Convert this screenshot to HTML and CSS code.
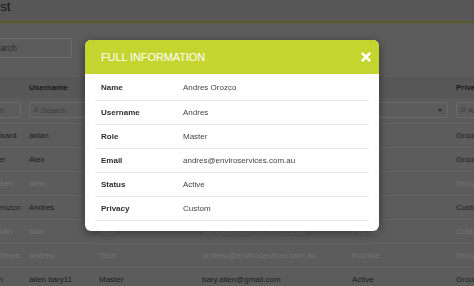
FILE: index.html
```html
<!DOCTYPE html>
<html>
<head>
<meta charset="utf-8">
<link rel="stylesheet" href="styles.css">
</head>
<body>
<div class="page">
  <header class="topbar"><h1 class="title">User List</h1></header>
  <div class="toolbar">
    <div class="search-box">Search</div>
  </div>
  <table class="grid">
    <colgroup>
      <col class="c1"><col class="c2"><col class="c3"><col class="c4"><col class="c5"><col class="c6">
    </colgroup>
    <thead>
      <tr class="head-row">
        <th>Name</th><th>Username</th><th>Role</th><th>Email</th><th>Status</th><th>Privacy</th>
      </tr>
      <tr class="filter-row">
        <td><div class="filter"><svg class="mag" viewBox="0 0 8 8"><circle cx="4.6" cy="3.4" r="2.3"/><path d="M3 5 L1 7"/></svg><span>Search</span></div></td>
        <td><div class="filter"><svg class="mag" viewBox="0 0 8 8"><circle cx="4.6" cy="3.4" r="2.3"/><path d="M3 5 L1 7"/></svg><span>Search</span></div></td>
        <td><div class="filter"><svg class="mag" viewBox="0 0 8 8"><circle cx="4.6" cy="3.4" r="2.3"/><path d="M3 5 L1 7"/></svg><span>Search</span></div></td>
        <td><div class="filter"><svg class="mag" viewBox="0 0 8 8"><circle cx="4.6" cy="3.4" r="2.3"/><path d="M3 5 L1 7"/></svg><span>Search</span></div></td>
        <td><div class="filter select"><span></span><i class="caret"></i></div></td>
        <td><div class="filter"><svg class="mag" viewBox="0 0 8 8"><circle cx="4.6" cy="3.4" r="2.3"/><path d="M3 5 L1 7"/></svg><span>All</span></div></td>
      </tr>
    </thead>
    <tbody>
      <tr><td>Aidan Pickard</td><td>aidan</td><td>Master</td><td>aidan@enviroservices.com.au</td><td>Active</td><td>Group</td></tr>
      <tr><td>Alex Baker</td><td>Alex</td><td>Tech</td><td>alex@enviroservices.com.au</td><td>Active</td><td>Group</td></tr>
      <tr class="off"><td>Allen Jensen</td><td>allen</td><td>Tech</td><td>allen@enviroservices.com.au</td><td>Inactive</td><td>Group</td></tr>
      <tr><td>Andres Orozco</td><td>Andres</td><td>Master</td><td>andres@enviroservices.com.au</td><td>Active</td><td>Custom</td></tr>
      <tr class="off"><td>Andrew Bain</td><td>bain</td><td>Tech</td><td>bain@enviroservices.com.au</td><td>Inactive</td><td>Custom</td></tr>
      <tr class="off"><td>Andy Mathews</td><td>andrew</td><td>Tech</td><td>andrew@enviroservices.com.au</td><td>Inactive</td><td>Group</td></tr>
      <tr><td>Bary Allen</td><td>allen bary11</td><td>Master</td><td>bary.allen@gmail.com</td><td>Active</td><td>Group</td></tr>
    </tbody>
  </table>
</div>

<div class="modal">
  <div class="modal-head">
    <span class="modal-title">FULL INFORMATION</span>
    <svg class="close" viewBox="0 0 10 10"><path d="M1.6 1.6 L8.4 8.4 M8.4 1.6 L1.6 8.4"/></svg>
  </div>
  <div class="modal-body">
    <table class="info">
      <tr><th>Name</th><td>Andres Orozco</td></tr>
      <tr><th>Username</th><td>Andres</td></tr>
      <tr><th>Role</th><td>Master</td></tr>
      <tr><th>Email</th><td>andres@enviroservices.com.au</td></tr>
      <tr><th>Status</th><td>Active</td></tr>
      <tr><th>Privacy</th><td>Custom</td></tr>
    </table>
  </div>
</div>
</body>
</html>
```

FILE: styles.css
```css
html, body {
  margin: 0;
  padding: 0;
  background: #5c5c5c;
  overflow: hidden;
  font-family: "Liberation Sans", Arial, sans-serif;
}

.page {
  margin-left: -39px;
  width: 620px;
}

.topbar {
  height: 21px;
  background: #575757;
  border-bottom: 2px solid #555b22;
}

.title {
  margin: 0 0 0 -2px;
  font-size: 13px;
  line-height: 13px;
  font-weight: normal;
  color: #141414;
}

.toolbar {
  padding-top: 15px;
  height: 20px;
}

.search-box {
  margin-left: 19px;
  width: 92px;
  height: 20px;
  box-sizing: border-box;
  border: 1px solid #6c6c6c;
  border-radius: 2px;
  padding-left: 9px;
  font-size: 8.5px;
  line-height: 18px;
  color: #2a2a2a;
}

.grid {
  margin-top: 19px;
  border-collapse: collapse;
  table-layout: fixed;
  width: 569px;
  font-size: 8px;
  color: #1c1c1c;
}

.c1 { width: 62px; }
.c2 { width: 70px; }
.c3 { width: 103px; }
.c4 { width: 150px; }
.c5 { width: 104px; }
.c6 { width: 80px; }

.grid th, .grid td {
  padding: 0 0 0 6px;
  text-align: left;
  white-space: nowrap;
  overflow: hidden;
}

.head-row {
  height: 21px;
  background: #575757;
}

.head-row th {
  font-weight: bold;
  color: #1a1a1a;
}

.filter-row {
  height: 25px;
}

.filter-row td {
  padding-right: 2px;
}

.filter {
  height: 16px;
  box-sizing: border-box;
  border: 1px solid #6a6a6a;
  border-radius: 2px;
  display: flex;
  align-items: center;
  gap: 2px;
  padding-left: 3px;
  color: #3c3c3c;
}

.mag {
  width: 6px;
  height: 6px;
  fill: none;
  stroke: #3c3c3c;
  stroke-width: 1;
}

.select {
  justify-content: flex-end;
  padding-right: 5px;
}

.caret {
  width: 0;
  height: 0;
  border-left: 2.5px solid transparent;
  border-right: 2.5px solid transparent;
  border-top: 3px solid #2a2a2a;
}

.grid tbody tr {
  height: 24px;
  border-top: 1px solid #646464;
}

.grid tbody tr.off {
  color: #747474;
}

.modal {
  position: fixed;
  left: 85px;
  top: 40px;
  width: 294px;
  background: #ffffff;
  border-radius: 6px;
  overflow: hidden;
  box-shadow: 0 2px 10px rgba(0, 0, 0, 0.45);
}

.modal-head {
  height: 34px;
  background: #c5d52f;
  display: flex;
  align-items: center;
  justify-content: space-between;
  padding: 0 8px 0 16px;
}

.modal-title {
  color: #ffffff;
  font-size: 11px;
  letter-spacing: -0.1px;
}

.close {
  width: 10px;
  height: 10px;
  fill: none;
  stroke: #ffffff;
  stroke-width: 2.7;
  stroke-linecap: round;
}

.modal-body {
  padding: 2px 10px 10px;
}

.info {
  width: 100%;
  border-collapse: collapse;
  font-size: 8px;
}

.info tr {
  height: 24px;
  border-bottom: 1px solid #e6e6e6;
}

.info th {
  width: 75px;
  padding-left: 6px;
  text-align: left;
  font-weight: bold;
  color: #2e2e2e;
}

.info td {
  padding-left: 6px;
  color: #444444;
}
```
